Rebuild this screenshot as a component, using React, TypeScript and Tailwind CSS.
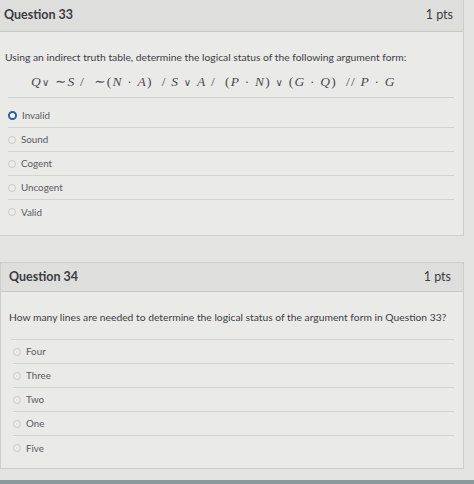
const font = { fontFamily: 'Lato, "Noto Sans", sans-serif' }

function Radio({ checked }: { checked?: boolean }) {
  if (checked) {
    return <span className="inline-block w-[9px] h-[9px] rounded-full border-[2.5px] border-[#2a5d9c] bg-white shrink-0" />
  }
  return <span className="inline-block w-[8px] h-[8px] rounded-full border border-[#c9c9c7] bg-[#ececea] shrink-0" />
}

function Option({ label, checked, last }: { label: string; checked?: boolean; last?: boolean }) {
  return (
    <div className={`h-[24px] flex items-center gap-[5px] ${last ? '' : 'border-b border-[#d2d2d0]'}`}>
      <Radio checked={checked} />
      <span className="text-[9.8px] text-[#5a5a60]">{label}</span>
    </div>
  )
}

function Formula() {
  const i = 'italic'
  return (
    <div
      className="text-[13.5px] text-[#4a4a52] tracking-[1.2px] whitespace-pre"
      style={{ fontFamily: '"Liberation Serif", "DejaVu Serif", serif' }}
    >
      <span className={i}>Q</span><span className="text-[10px]">∨</span> ∼<span className={i}>S</span> /  ∼(<span className={i}>N</span> · <span className={i}>A</span>)  / <span className={i}>S</span> <span className="text-[10px]">∨</span> <span className={i}>A</span> /  (<span className={i}>P</span> · <span className={i}>N</span>) <span className="text-[10px]">∨</span> (<span className={i}>G</span> · <span className={i}>Q</span>)  // <span className={i}>P</span> · <span className={i}>G</span>
    </div>
  )
}

export default function App() {
  return (
    <div className="w-[474px] h-[484px] bg-[#e4e4e2] overflow-hidden relative" style={font}>
      {/* Question 33 */}
      <div className="w-[464px] h-[236px] bg-[#eaeae8] border-r border-b border-[#cdcdcb]">
        <div className="h-[32px] bg-[#dededc] border-b border-[#c9c9c7] flex items-center justify-between pl-[4px] pr-[10px]">
          <span className="text-[12.5px] font-bold text-[#3b3b42]">Question 33</span>
          <span className="text-[12.5px] text-[#3b3b42]">1 pts</span>
        </div>
        <div className="pl-[5px] pt-[17px] text-[10.3px] text-[#3d3d44] leading-[16px]">
          Using an indirect truth table, determine the logical status of the following argument form:
        </div>
        <div className="pl-[31px] pt-[7px] pb-[4px] h-[32px] flex items-center">
          <Formula />
        </div>
        <div className="ml-[8px] mr-[9px] border-t border-[#d2d2d0] pt-[6px]">
          <Option label="Invalid" checked />
          <Option label="Sound" />
          <Option label="Cogent" />
          <Option label="Uncogent" />
          <Option label="Valid" last />
        </div>
      </div>

      <div className="h-[26px]" />

      {/* Question 34 */}
      <div className="w-[464px] h-[207px] bg-[#eaeae8] border border-[#cdcdcb]">
        <div className="h-[29px] bg-[#dededc] border-b border-[#c9c9c7] flex items-center justify-between pl-[8px] pr-[12px]">
          <span className="text-[12.5px] font-bold text-[#3b3b42]">Question 34</span>
          <span className="text-[12.5px] text-[#3b3b42]">1 pts</span>
        </div>
        <div className="pl-[8px] pt-[17px] text-[10.3px] text-[#3d3d44] leading-[16px]">
          How many lines are needed to determine the logical status of the argument form in Question 33?
        </div>
        <div className="ml-[10px] mr-[9px] border-t border-[#d2d2d0] mt-[14px] pl-[2px]">
          <Option label="Four" />
          <Option label="Three" />
          <Option label="Two" />
          <Option label="One" />
          <Option label="Five" last />
        </div>
      </div>

      <div className="absolute left-0 right-0 bottom-0 h-[4px] bg-[#8a9a9c]" />
    </div>
  )
}
